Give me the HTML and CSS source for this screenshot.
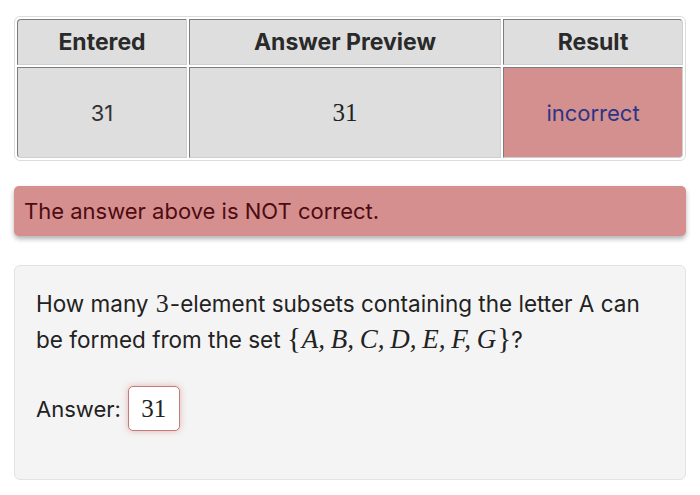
FILE: index.html
```html
<!DOCTYPE html>
<html lang="en">
<head>
    <meta charset="UTF-8">
    <meta name="viewport" content="width=device-width, initial-scale=1.0">
    <title>Problem 7</title>
    <link rel="stylesheet" href="styles.css">
</head>
<body>
    <div class="results-wrapper">
        <table class="results">
            <tr>
                <th class="col-entered">Entered</th>
                <th class="col-preview">Answer Preview</th>
                <th class="col-result">Result</th>
            </tr>
            <tr>
                <td>31</td>
                <td class="math">31</td>
                <td class="incorrect">incorrect</td>
            </tr>
        </table>
    </div>
    <div class="alert">The answer above is NOT correct.</div>
    <div class="problem">
        <p class="question">How many <span class="math num">3</span>-element subsets containing the letter A can be formed from the set <span class="math set">{<span class="set-items">A, B, C, D, E, F, G</span>}</span>?</p>
        <div class="answer-row">
            <span class="answer-label">Answer:</span>
            <span class="answer-box">31</span>
        </div>
    </div>
</body>
</html>
```

FILE: styles.css
```css
body {
    margin: 0;
    padding: 16px 14px;
    background-color: #fff;
    font-family: Inter, "Noto Sans", sans-serif;
    color: #222;
}
.results-wrapper {
    border: 1px solid #dcdcdc;
    border-radius: 6px;
}
.results {
    width: 100%;
    border-collapse: separate;
    border-spacing: 2px;
}
.results th,
.results td {
    background-color: #dedede;
    border-top: 1px solid #7c7c7c;
    border-left: 1px solid #7c7c7c;
    border-bottom: 1px solid #cfcfcf;
    border-right: 1px solid #cfcfcf;
    text-align: center;
    padding: 0;
}
.results th {
    height: 44px;
    font-size: 23px;
    font-weight: bold;
    color: #2a2a2a;
}
.results td {
    height: 89px;
    font-size: 22px;
    color: #333;
}
.results tr:first-child th:first-child {
    border-top-left-radius: 4px;
}
.results tr:first-child th:last-child {
    border-top-right-radius: 4px;
}
.results tr:last-child td:first-child {
    border-bottom-left-radius: 4px;
}
.results tr:last-child td:last-child {
    border-bottom-right-radius: 4px;
}
.col-entered {
    width: 168px;
}
.col-result {
    width: 178px;
}
.math {
    font-family: "Liberation Serif", "DejaVu Serif", serif;
    line-height: 1;
}
.results td.math {
    font-size: 25px;
    color: #222;
}
.results td.incorrect {
    background-color: #d48f8f;
    color: #2b3585;
}
.alert {
    margin-top: 25px;
    height: 50px;
    box-sizing: border-box;
    padding: 0 10px;
    display: flex;
    align-items: center;
    background-color: #d58f8f;
    color: #4e0b10;
    font-size: 22px;
    border-radius: 5px;
    box-shadow: 0 3px 5px rgba(0, 0, 0, 0.3);
}
.problem {
    margin-top: 29px;
    height: 215px;
    box-sizing: border-box;
    padding: 20px 44px 18px 21px;
    background-color: #f4f4f4;
    border: 1px solid #e3e3e3;
    border-radius: 6px;
}
.question {
    margin: 0;
    font-size: 22.5px;
    line-height: 36px;
    color: #222;
}
.num {
    font-size: 26px;
    margin: 0 1px;
}
.set {
    font-size: 29px;
}
.set-items {
    font-style: italic;
    font-size: 27px;
    margin: 0 1px;
    word-spacing: -1px;
}
.answer-row {
    margin-top: 28px;
    display: flex;
    align-items: center;
    gap: 7px;
}
.answer-label {
    font-size: 22px;
    color: #222;
}
.answer-box {
    width: 52px;
    height: 45px;
    box-sizing: border-box;
    display: flex;
    align-items: center;
    justify-content: center;
    background-color: #fff;
    border: 1px solid #c27a7a;
    border-radius: 5px;
    box-shadow: 0 0 6px rgba(210, 100, 100, 0.45);
    font-family: "Liberation Serif", "DejaVu Serif", serif;
    font-size: 25px;
    color: #222;
}
```
